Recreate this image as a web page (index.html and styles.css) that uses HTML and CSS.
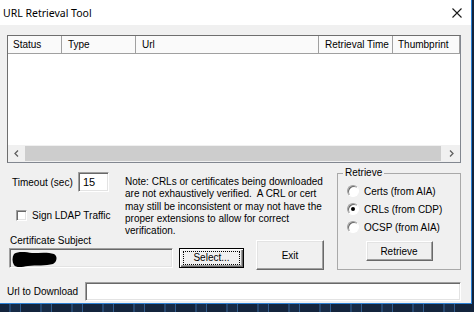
FILE: index.html
```html
<!DOCTYPE html>
<html>
<head>
<meta charset="utf-8">
<title>URL Retrieval Tool</title>
<link rel="stylesheet" href="styles.css">
</head>
<body>
<div class="window">
  <div class="titlebar">
    <span class="title">URL Retrieval Tool</span>
    <svg class="close" width="10" height="10" viewBox="0 0 10 10"><path d="M0.5 0.5 L9.5 9.5 M9.5 0.5 L0.5 9.5" stroke="#1a1a1a" stroke-width="1.1" fill="none"/></svg>
  </div>
  <div class="client">
    <div class="listview">
      <div class="header">
        <div class="col c-status">Status</div>
        <div class="col c-type">Type</div>
        <div class="col c-url">Url</div>
        <div class="col c-time">Retrieval Time</div>
        <div class="col c-thumb">Thumbprint</div>
      </div>
      <div class="rows"></div>
      <div class="hscroll">
        <span class="arrow"><svg width="5" height="7" viewBox="0 0 5 7"><path d="M4 0.5 L1 3.5 L4 6.5" stroke="#606060" stroke-width="1.3" fill="none"/></svg></span>
        <div class="thumb"></div>
        <span class="arrow"><svg width="5" height="7" viewBox="0 0 5 7"><path d="M1 0.5 L4 3.5 L1 6.5" stroke="#606060" stroke-width="1.3" fill="none"/></svg></span>
      </div>
    </div>
    <div class="lower">
      <div class="lowerleft">
        <div class="band1">
          <div class="opts">
            <div class="timeout">
              <span class="tlabel">Timeout (sec)</span>
              <div class="edit tedit">15</div>
            </div>
            <div class="check">
              <span class="checkbox"></span>
              <span>Sign LDAP Traffic</span>
            </div>
          </div>
          <p class="note">Note: CRLs or certificates being downloaded<br>are not exhaustively verified.&nbsp; A CRL or cert<br>may still be inconsistent or may not have the<br>proper extensions to allow for correct<br>verification.</p>
        </div>
        <div class="band2">
          <div class="subject">
            <div class="slabel">Certificate Subject</div>
            <div class="edit readonly">
              <svg class="blob" width="46" height="17" viewBox="0 0 46 17"><path d="M2 3 C6 0 14 1 20 2 C28 2 36 1 42 3 C46 5 45 11 41 13 C34 15 24 14 16 15 C10 16 4 17 2 14 C0 11 0 6 2 3 Z" fill="#000"/></svg>
            </div>
          </div>
          <button class="btn default select"><span class="focus">Select...</span></button>
          <button class="btn exit">Exit</button>
        </div>
      </div>
      <fieldset class="group">
        <legend>Retrieve</legend>
        <div class="radio"><span class="rb"></span><span>Certs (from AIA)</span></div>
        <div class="radio"><span class="rb checked"></span><span>CRLs (from CDP)</span></div>
        <div class="radio"><span class="rb"></span><span>OCSP (from AIA)</span></div>
        <button class="btn retrieve">Retrieve</button>
      </fieldset>
    </div>
    <div class="urlrow">
      <span class="ulabel">Url to Download</span>
      <div class="edit uedit"></div>
    </div>
  </div>
</div>
</body>
</html>
```
FILE: styles.css
```css
* { box-sizing: border-box; }
html, body { margin: 0; padding: 0; }
body {
  width: 474px;
  height: 312px;
  overflow: hidden;
  background: #14263f;
  background-image: repeating-linear-gradient(90deg, #13243c 0 9px, #24466e 9px 11px, #172b46 11px 20px, #2f5b8c 20px 21px, #13243c 21px 31px);
  font-family: "Liberation Sans", Arial, sans-serif;
  font-size: 10px;
  color: #000;
}
.window {
  width: 472px;
  height: 304px;
  background: #f0f0f0;
  border-right: 1px solid #2b80d4;
  border-bottom: 1px solid #2b80d4;
  display: flex;
  flex-direction: column;
}
.titlebar {
  height: 25px;
  flex: none;
  background: #fff;
  display: flex;
  align-items: center;
  justify-content: space-between;
  padding: 0 9px 0 3px;
}
.title {
  font-family: "Noto Sans", "Open Sans", sans-serif;
  font-size: 10.5px;
  color: #000;
}
.close { display: block; }
.client {
  flex: 1;
  display: flex;
  flex-direction: column;
}
.listview {
  margin: 10px 0 0 7px;
  width: 454px;
  height: 128px;
  border: 1px solid #828790;
  border-top-color: #6e6e6e;
  border-left-color: #6e6e6e;
  background: #fff;
  display: flex;
  flex-direction: column;
}
.header {
  display: flex;
  height: 18px;
  flex: none;
  border-bottom: 1px solid #a0a0a0;
  background: #fafafa;
}
.col {
  height: 100%;
  display: flex;
  align-items: center;
  padding-left: 5px;
  border-right: 1px solid #a0a0a0;
  white-space: nowrap;
}
.c-status { width: 54px; }
.c-type { width: 74px; padding-left: 6px; }
.c-url { width: 183px; padding-left: 6px; }
.c-time { width: 74px; padding-left: 6px; }
.c-thumb { width: 67px; }
.rows { flex: 1; }
.hscroll {
  height: 17px;
  flex: none;
  background: #f0f0f0;
  display: flex;
  align-items: center;
}
.arrow {
  width: 17px;
  height: 17px;
  display: flex;
  align-items: center;
  justify-content: center;
  flex: none;
}
.thumb {
  flex: 1;
  height: 15px;
  background: #cdcdcd;
  margin-right: 2px;
}
.lower {
  display: flex;
  height: 108px;
  flex: none;
}
.lowerleft {
  width: 337px;
  display: flex;
  flex-direction: column;
}
.band1 {
  height: 71px;
  display: flex;
}
.opts {
  width: 125px;
  flex: none;
}
.timeout {
  display: flex;
  align-items: center;
  margin-top: 9px;
  padding-left: 12px;
}
.tlabel { width: 66px; }
.edit {
  background: #fff;
  border-top: 1px solid #a0a0a0;
  border-left: 1px solid #a0a0a0;
  border-right: 1px solid #fff;
  border-bottom: 1px solid #fff;
  box-shadow: inset 1px 1px 0 #696969, inset -1px -1px 0 #e3e3e3;
}
.tedit {
  width: 31px;
  height: 20px;
  padding: 3px 0 0 4px;
  font-size: 11px;
}
.check {
  display: flex;
  align-items: center;
  margin-top: 18px;
  padding-left: 16px;
}
.checkbox {
  width: 11px;
  height: 11px;
  margin-right: 5px;
  background: #fff;
  border-top: 1px solid #a0a0a0;
  border-left: 1px solid #a0a0a0;
  border-right: 1px solid #fff;
  border-bottom: 1px solid #fff;
  box-shadow: inset 1px 1px 0 #696969, inset -1px -1px 0 #e3e3e3;
}
.note {
  margin: 13px 0 0 0;
  line-height: 12.25px;
  white-space: nowrap;
}
.band2 {
  display: flex;
  height: 37px;
}
.subject {
  margin-left: 9px;
  width: 164px;
  flex: none;
}
.slabel {
  padding-left: 1px;
  height: 14px;
  line-height: 13px;
}
.readonly {
  background: #f0f0f0;
  height: 20px;
  padding: 2px 0 0 2px;
}
.blob { display: block; }
.btn {
  font-family: "Liberation Sans", Arial, sans-serif;
  font-size: 10px;
  color: #000;
  background: #f0f0f0;
  border-top: 1px solid #fff;
  border-left: 1px solid #fff;
  border-right: 1px solid #696969;
  border-bottom: 1px solid #696969;
  box-shadow: inset -1px -1px 0 #a0a0a0, inset 1px 1px 0 #e3e3e3;
  padding: 0;
  display: flex;
  align-items: center;
  justify-content: center;
}
.default {
  border: 1px solid #000;
  box-shadow: inset 1px 1px 0 #fff, inset -1px -1px 0 #696969, inset -2px -2px 0 #a0a0a0;
}
.select {
  margin: 14px 0 0 6px;
  width: 65px;
  height: 20px;
}
.focus {
  display: block;
  width: 57px;
  height: 14px;
  line-height: 12px;
  border: 1px dotted #000;
}
.exit {
  margin: 6px 0 0 12px;
  width: 68px;
  height: 30px;
}
.group {
  margin: 4px 0 0 0;
  width: 124px;
  height: 103px;
  padding: 0;
  border: 1px solid #a9a9a9;
  box-shadow: none;
  min-width: 0;
}
.group legend {
  margin-left: 5px;
  padding: 0 2px;
  line-height: 12px;
}
.radio {
  display: flex;
  align-items: center;
  height: 18px;
  padding-left: 9px;
}
.radio:first-of-type { margin-top: 3px; }
.rb {
  width: 12px;
  height: 12px;
  border-radius: 50%;
  background: #fff;
  margin-right: 5px;
  border: 1px solid;
  border-color: #a0a0a0 #fff #fff #a0a0a0;
  box-shadow: inset 1px 1px 0 #696969;
  position: relative;
  flex: none;
}
.rb.checked::after {
  content: "";
  position: absolute;
  left: 3px;
  top: 3px;
  width: 4px;
  height: 4px;
  border-radius: 50%;
  background: #000;
}
.retrieve {
  margin: 5px auto 0;
  width: 67px;
  height: 20px;
}
.urlrow {
  display: flex;
  align-items: center;
  margin-top: 11px;
  padding-left: 7px;
}
.ulabel { width: 78px; }
.uedit {
  width: 376px;
  height: 19px;
}
```
